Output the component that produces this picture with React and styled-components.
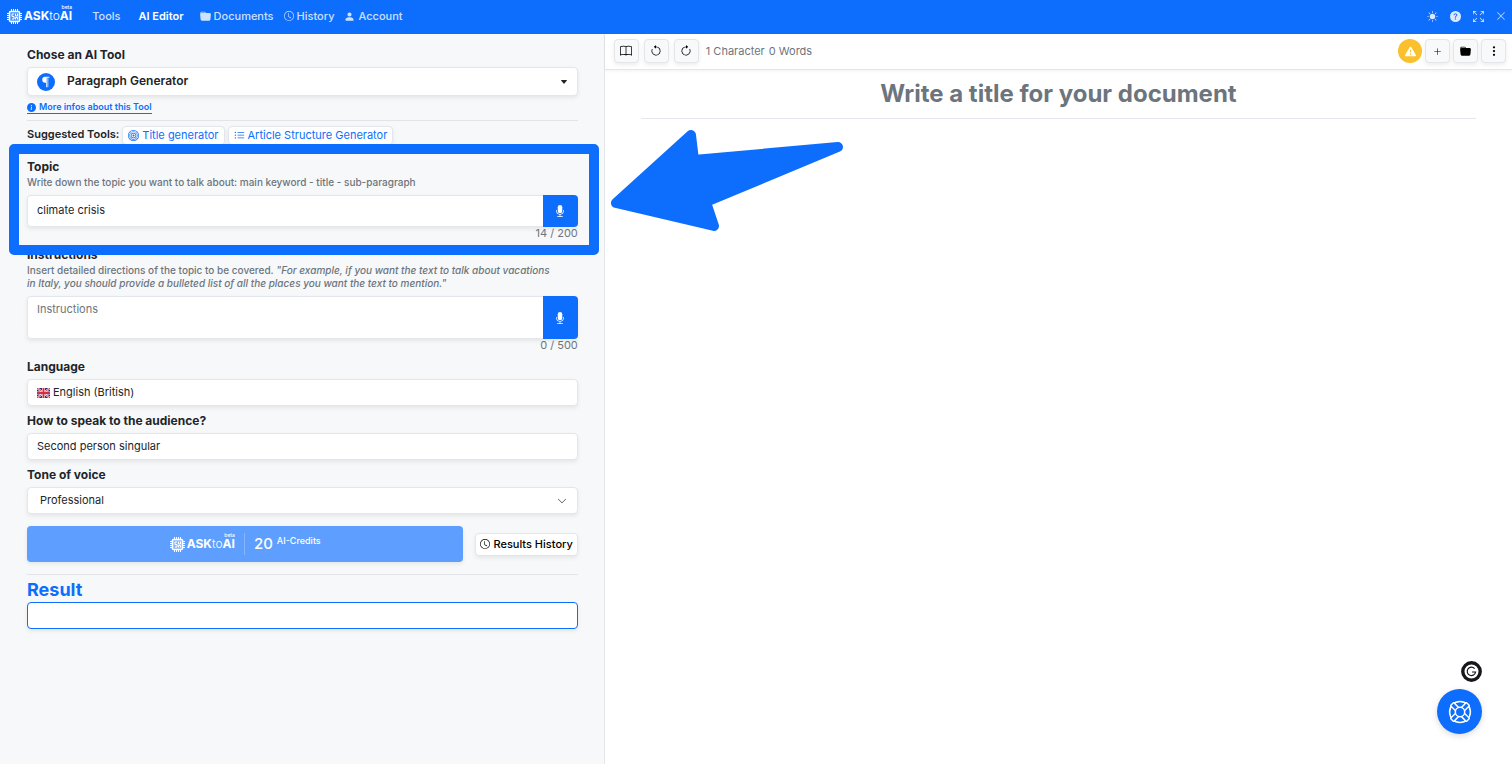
import React from "react";
import styled, { createGlobalStyle } from "styled-components";
import {
  BsArrowClockwise,
  BsArrowCounterclockwise,
  BsArrowsFullscreen,
  BsBook,
  BsBrightnessHighFill,
  BsBullseye,
  BsCaretDownFill,
  BsChevronDown,
  BsClock,
  BsExclamationTriangleFill,
  BsFolderFill,
  BsInfoCircleFill,
  BsListUl,
  BsMicFill,
  BsParagraph,
  BsPersonFill,
  BsPlusLg,
  BsQuestionCircleFill,
  BsThreeDotsVertical,
  BsXLg,
} from "react-icons/bs";

const blue = "#0d6efd";
const gray = "#6c757d";
const border = "#e3e6ea";
const shadow = "0 2px 4px rgba(0, 0, 0, 0.075)";

const GlobalStyle = createGlobalStyle`
  * {
    box-sizing: border-box;
  }

  body {
    margin: 0;
    background: #fff;
    color: #212529;
    font-family: Inter, "Liberation Sans", sans-serif;
    font-size: 11px;
    font-weight: 400;
  }

  button, input, textarea, select {
    font: inherit;
    color: inherit;
    margin: 0;
  }

  svg {
    flex: none;
  }
`;

const Page = styled.div`
  display: flex;
  flex-direction: column;
  min-height: 100vh;
`;

/* top bar */

const TopBar = styled.header`
  display: flex;
  align-items: center;
  justify-content: space-between;
  height: 34px;
  padding: 0 6px 2px 7px;
  background: ${blue};
  color: #fff;
`;

const NavLinks = styled.nav`
  display: flex;
  align-items: center;
`;

const LogoWrapper = styled.span`
  display: inline-flex;
  align-items: center;
  gap: 2px;
  color: #fff;
  font-size: 12px;
  font-weight: 700;
  line-height: 16px;
`;

const Thin = styled.span`
  font-weight: 300;
`;

const LogoEnd = styled.span`
  position: relative;
`;

const Beta = styled.span`
  position: absolute;
  right: 0;
  top: -5px;
  font-size: 5px;
  font-weight: 500;
  line-height: 8px;
`;

const NavLink = styled.a`
  display: inline-flex;
  align-items: center;
  gap: 3px;
  margin-left: ${(props) => props.$gap || 10}px;
  color: ${(props) => (props.$active ? "#fff" : "rgba(255, 255, 255, 0.8)")};
  font-weight: ${(props) => (props.$active ? 600 : 500)};
  text-decoration: none;
`;

const TopActions = styled.div`
  display: flex;
  align-items: center;
  gap: 12px;
`;

const TopButton = styled.button`
  display: flex;
  padding: 0;
  border: 0;
  background: none;
  color: rgba(255, 255, 255, 0.85);
`;

/* columns */

const Columns = styled.div`
  display: flex;
  flex: 1;
`;

const Sidebar = styled.main`
  flex: 0 0 40%;
  padding: 12px 27px;
  background: #f7f8fa;
  box-shadow: inset -1px 0 0 ${border};
`;

const Editor = styled.section`
  flex: 1;
  min-width: 0;
`;

const Label = styled.label`
  display: block;
  font-size: 12px;
  font-weight: 700;
  line-height: 18px;
`;

const Help = styled.p`
  margin: 0 0 3px;
  color: ${gray};
  font-size: 10px;
  font-weight: 500;
  line-height: 13px;
`;

const Field = styled.div`
  position: relative;
  margin-top: 6px;
`;

const Box = styled.div`
  position: relative;
  display: flex;
  align-items: center;
  height: ${(props) => props.$height || 27}px;
  margin-top: 3px;
  border: 1px solid ${(props) => (props.$active ? blue : border)};
  border-radius: 4px;
  background: #fff;
  box-shadow: ${shadow};

  & > svg {
    margin-left: 9px;
  }
`;

const BoxInput = styled.input`
  flex: 1;
  min-width: 0;
  height: 100%;
  padding: 0 9px 2px;
  padding-left: ${(props) => (props.$afterIcon ? 3 : 9)}px;
  border: 0;
  border-radius: 4px;
  background: none;
  outline: none;
`;

const BoxSelect = styled.select`
  flex: 1;
  height: 100%;
  padding: 0 12px 2px;
  border: 0;
  background: none;
  appearance: none;
  outline: none;
  font-size: ${(props) => (props.$large ? 12 : 11)}px;
  font-weight: ${(props) => (props.$large ? 600 : 400)};
`;

const SelectArrow = styled.span`
  display: flex;
  margin-right: ${(props) => props.$right}px;
  pointer-events: none;
`;

const ToolIcon = styled.span`
  display: flex;
  align-items: center;
  justify-content: center;
  width: 18px;
  height: 18px;
  margin-left: 9px;
  border-radius: 50%;
  background: ${blue};
  color: #fff;
`;

const InfoLink = styled.a`
  display: inline-flex;
  align-items: center;
  gap: 3px;
  margin-top: 5px;
  border-bottom: 1px solid ${blue};
  color: ${blue};
  font-size: 9px;
  font-weight: 600;
  line-height: 12px;
  text-decoration: none;
  vertical-align: top;
`;

const Divider = styled.hr`
  height: 1px;
  margin: ${(props) => props.$space} 0 0;
  border: 0;
  background: #e2e4e7;
`;

const Suggested = styled.div`
  display: flex;
  align-items: flex-start;
  gap: 3px;
  height: 26px;
  margin-top: 5px;
  line-height: 17px;
`;

const SuggestedLabel = styled.span`
  font-weight: 600;
`;

const SmallButton = styled.button`
  display: inline-flex;
  align-items: center;
  gap: 3px;
  height: ${(props) => props.$height || 19}px;
  padding: 0 ${(props) => (props.$dark ? 4 : 5)}px;
  border: 1px solid ${border};
  border-radius: 4px;
  background: #fff;
  box-shadow: ${shadow};
  color: ${(props) => (props.$dark ? "#000" : blue)};
  font-weight: ${(props) => (props.$dark ? 500 : 400)};
  white-space: nowrap;
`;

const InputGroup = styled.div`
  display: flex;
  height: ${(props) => props.$height}px;
  margin-top: 6px;
  border-radius: 4px;
  box-shadow: ${shadow};
`;

const GroupInput = styled.input`
  flex: 1;
  min-width: 0;
  padding: 0 9px 2px;
  border: 1px solid ${border};
  border-right: 0;
  border-radius: 4px 0 0 4px;
  background: #fff;
  outline: none;
`;

const GroupTextarea = styled(GroupInput)`
  padding: 6px 9px;
  line-height: 13px;
  resize: none;

  &::placeholder {
    color: ${gray};
  }
`;

const MicButton = styled.button`
  display: flex;
  align-items: center;
  justify-content: center;
  width: 35px;
  padding: 0;
  border: 0;
  border-radius: 0 4px 4px 0;
  background: ${blue};
  color: #fff;
`;

const Counter = styled.div`
  color: ${gray};
  line-height: 13px;
  text-align: right;
`;

/* lies over the form and points at the topic field */

const Highlight = styled.div`
  position: absolute;
  inset: -14px -21px -15px -18px;
  z-index: 2;
  border: 10px solid ${blue};
  border-radius: 5px;
  pointer-events: none;
`;

const Pointer = styled.svg`
  position: absolute;
  left: calc(100% + 33px);
  top: -28px;
  z-index: 2;
  pointer-events: none;
`;

const Actions = styled.div`
  display: flex;
  align-items: center;
  gap: 12px;
  margin-top: 12px;
`;

const Generate = styled.button`
  display: flex;
  flex: 1;
  align-items: center;
  justify-content: center;
  gap: 9px;
  height: 36px;
  padding: 0;
  border: 0;
  border-radius: 4px;
  background: #5e9efe;
  box-shadow: ${shadow};
  color: #fff;
`;

const Credits = styled.span`
  display: flex;
  gap: 4px;
  padding-left: 9px;
  border-left: 1px solid #86b6fe;
  font-size: 15px;
  font-weight: 500;
  line-height: 22px;
`;

const CreditsUnit = styled.span`
  font-size: 9px;
  line-height: 16px;
`;

const ResultTitle = styled.h2`
  margin: 4px 0 0;
  color: ${blue};
  font-size: 18px;
  font-weight: 700;
  line-height: 22px;
`;

const ResultBox = styled(Box)`
  margin-top: 1px;
`;

/* editor */

const Toolbar = styled.div`
  display: flex;
  align-items: center;
  justify-content: space-between;
  height: 36px;
  padding: 0 6px 1px 9px;
  border-bottom: 1px solid ${border};
  box-shadow: 0 1px 3px rgba(0, 0, 0, 0.06);
`;

const ToolGroup = styled.div`
  display: flex;
  align-items: center;
  gap: ${(props) => props.$gap}px;
  color: ${gray};
`;

const ToolButton = styled.button`
  display: flex;
  align-items: center;
  justify-content: center;
  width: 25px;
  height: 24px;
  padding: 0;
  border: 1px solid ${border};
  border-radius: 4px;
  background: #f8f9fa;
  box-shadow: ${shadow};
  color: #000;
`;

const WarnButton = styled.button`
  display: flex;
  align-items: center;
  justify-content: center;
  width: 24px;
  height: 24px;
  padding: 0;
  border: 0;
  border-radius: 50%;
  background: #fbc02d;
  color: #fff;
`;

const Counts = styled.span`
  display: flex;
  gap: 4px;
  margin-left: 2px;
`;

const TitleInput = styled.input`
  display: block;
  width: calc(100% - 72px);
  height: 49px;
  margin: 0 36px;
  padding: 0 0 2px;
  border: 0;
  border-bottom: 1px solid ${border};
  background: none;
  outline: none;
  font-size: 24px;
  font-weight: 700;
  text-align: center;

  &::placeholder {
    color: ${gray};
  }
`;

const Floating = styled.div`
  position: fixed;
  right: 30px;
  bottom: 30px;
  display: flex;
  flex-direction: column;
  align-items: flex-end;
  gap: 7px;
`;

const HelpButton = styled.button`
  display: flex;
  align-items: center;
  justify-content: center;
  width: 45px;
  height: 45px;
  padding: 0;
  border: 0;
  border-radius: 50%;
  background: ${blue};
  box-shadow: 0 2px 6px rgba(0, 0, 0, 0.15);
  color: #fff;
`;

const GButton = styled.button`
  display: flex;
  padding: 0;
  border: 0;
  background: none;
`;

const Chip = () => (
  <svg width="15" height="15" viewBox="0 0 30 30" fill="none" stroke="currentColor" strokeWidth="2">
    <rect x="5" y="5" width="20" height="20" rx="2" strokeWidth="3" fill="rgba(255, 255, 255, 0.25)" />
    <path d="M9 0v5M13 0v5M17 0v5M21 0v5M9 25v5M13 25v5M17 25v5M21 25v5M0 9h5M0 13h5M0 17h5M0 21h5M25 9h5M25 13h5M25 17h5M25 21h5" />
    <path d="M14 10h-4v5h4v5h-4M17 9v5h4V9M21 21v-4h-4v4" />
  </svg>
);

const Logo = () => (
  <LogoWrapper>
    <Chip />
    <span>
      ASK<Thin>to</Thin>
      <LogoEnd>
        AI<Beta>beta</Beta>
      </LogoEnd>
    </span>
  </LogoWrapper>
);

const Flag = () => (
  <svg width="13" height="10" viewBox="0 0 26 20" aria-hidden="true">
    <rect width="26" height="20" rx="2" fill="#29337a" />
    <path d="M0 0l26 20M26 0L0 20" stroke="#fff" strokeWidth="4" />
    <path d="M0 0l26 20M26 0L0 20" stroke="#d32f45" strokeWidth="2" />
    <path d="M13 0v20M0 10h26" stroke="#fff" strokeWidth="6" />
    <path d="M13 0v20M0 10h26" stroke="#d32f45" strokeWidth="4" />
  </svg>
);

const LifeRing = () => (
  <svg width="24" height="24" viewBox="0 0 24 24" fill="none" stroke="currentColor" strokeWidth="1.5">
    <circle cx="12" cy="12" r="10.4" />
    {[45, 135, 225, 315].map((angle) => (
      <path
        key={angle}
        transform={`rotate(${angle} 12 12)`}
        d="M9.8 8V1.6Q9.8 .8 10.6 .8H13.4Q14.2 .8 14.2 1.6V8"
        fill={blue}
      />
    ))}
    <circle cx="12" cy="12" r="4.7" fill={blue} />
  </svg>
);

const Header = () => (
  <TopBar>
    <NavLinks>
      <Logo />
      <NavLink href="#tools" $gap={20}>Tools</NavLink>
      <NavLink href="#editor" $gap={18} $active>AI Editor</NavLink>
      <NavLink href="#documents" $gap={16}>
        <BsFolderFill size={11} />
        Documents
      </NavLink>
      <NavLink href="#history">
        <BsClock size={10} />
        History
      </NavLink>
      <NavLink href="#account">
        <BsPersonFill size={11} />
        Account
      </NavLink>
    </NavLinks>
    <TopActions>
      <TopButton aria-label="Theme"><BsBrightnessHighFill size={11} /></TopButton>
      <TopButton aria-label="Help"><BsQuestionCircleFill size={11} /></TopButton>
      <TopButton aria-label="Fullscreen"><BsArrowsFullscreen size={11} /></TopButton>
      <TopButton aria-label="Close"><BsXLg size={10} /></TopButton>
    </TopActions>
  </TopBar>
);

const ToolForm = () => (
  <Sidebar>
    <Label htmlFor="tool">Chose an AI Tool</Label>
    <Box $height={29}>
      <ToolIcon><BsParagraph size={12} /></ToolIcon>
      <BoxSelect id="tool" $large>
        <option>Paragraph Generator</option>
      </BoxSelect>
      <SelectArrow $right={9}><BsCaretDownFill size={8} /></SelectArrow>
    </Box>
    <InfoLink href="#infos">
      <BsInfoCircleFill size={9} />
      More infos about this Tool
    </InfoLink>
    <Divider $space="6px" />
    <Suggested>
      <SuggestedLabel>Suggested Tools:</SuggestedLabel>
      <SmallButton><BsBullseye size={11} />Title generator</SmallButton>
      <SmallButton><BsListUl size={11} />Article Structure Generator</SmallButton>
    </Suggested>

    <Field>
      <Label htmlFor="topic">Topic</Label>
      <Help>Write down the topic you want to talk about: main keyword - title - sub-paragraph</Help>
      <InputGroup $height={32}>
        <GroupInput id="topic" defaultValue="climate crisis" />
        <MicButton aria-label="Dictate topic"><BsMicFill size={12} /></MicButton>
      </InputGroup>
      <Counter>14 / 200</Counter>
      <Highlight />
      <Pointer width="232" height="101" viewBox="0 0 232 101">
        <path
          d="M5 73L80 5L83 30L227 17L95 72L103 96Z"
          fill={blue}
          stroke={blue}
          strokeWidth="10"
          strokeLinejoin="round"
        />
      </Pointer>
    </Field>

    <Field>
      <Label htmlFor="instructions">Instructions</Label>
      <Help>
        Insert detailed directions of the topic to be covered.{" "}
        <em>
          "For example, if you want the text to talk about vacations
          <br />
          in Italy, you should provide a bulleted list of all the places you want the text to
          mention."
        </em>
      </Help>
      <InputGroup $height={43}>
        <GroupTextarea as="textarea" id="instructions" placeholder="Instructions" />
        <MicButton aria-label="Dictate instructions"><BsMicFill size={12} /></MicButton>
      </InputGroup>
      <Counter>0 / 500</Counter>
    </Field>

    <Field>
      <Label htmlFor="language">Language</Label>
      <Box>
        <Flag />
        <BoxInput id="language" defaultValue="English (British)" $afterIcon />
      </Box>
    </Field>

    <Field>
      <Label htmlFor="audience">How to speak to the audience?</Label>
      <Box>
        <BoxInput id="audience" defaultValue="Second person singular" />
      </Box>
    </Field>

    <Field>
      <Label htmlFor="tone">Tone of voice</Label>
      <Box>
        <BoxSelect id="tone">
          <option>Professional</option>
        </BoxSelect>
        <SelectArrow $right={10}><BsChevronDown size={10} /></SelectArrow>
      </Box>
    </Field>

    <Actions>
      <Generate>
        <Logo />
        <Credits>
          20 <CreditsUnit>AI-Credits</CreditsUnit>
        </Credits>
      </Generate>
      <SmallButton $height={23} $dark><BsClock size={10} />Results History</SmallButton>
    </Actions>

    <Divider $space="12px" />
    <ResultTitle>Result</ResultTitle>
    <ResultBox $active>
      <BoxInput aria-label="Result" />
    </ResultBox>
  </Sidebar>
);

const DocumentEditor = () => (
  <Editor>
    <Toolbar>
      <ToolGroup $gap={5}>
        <ToolButton aria-label="Read"><BsBook size={12} /></ToolButton>
        <ToolButton aria-label="Undo"><BsArrowCounterclockwise size={12} /></ToolButton>
        <ToolButton aria-label="Redo"><BsArrowClockwise size={12} /></ToolButton>
        <Counts>
          <span>1 Character</span>
          <span>0 Words</span>
        </Counts>
      </ToolGroup>
      <ToolGroup $gap={3}>
        <WarnButton aria-label="Warnings"><BsExclamationTriangleFill size={11} /></WarnButton>
        <ToolButton aria-label="New"><BsPlusLg size={9} /></ToolButton>
        <ToolButton aria-label="Open"><BsFolderFill size={11} /></ToolButton>
        <ToolButton aria-label="More"><BsThreeDotsVertical size={12} /></ToolButton>
      </ToolGroup>
    </Toolbar>
    <TitleInput aria-label="Document title" placeholder="Write a title for your document" />
  </Editor>
);

const App = () => (
  <>
    <GlobalStyle />
    <Page>
      <Header />
      <Columns>
        <ToolForm />
        <DocumentEditor />
      </Columns>
      <Floating>
        <GButton aria-label="Writing assistant">
          <svg width="21" height="21" viewBox="0 0 21 21" fill="none">
            <circle cx="10.5" cy="10.5" r="8.7" fill="#fff" stroke="#15171a" strokeWidth="3.4" />
            <path d="M13.6 7.6A4.2 4.2 0 1 0 14.6 11H11" stroke="#15171a" strokeWidth="1.2" />
          </svg>
        </GButton>
        <HelpButton aria-label="Support"><LifeRing /></HelpButton>
      </Floating>
    </Page>
  </>
);

export default App;
